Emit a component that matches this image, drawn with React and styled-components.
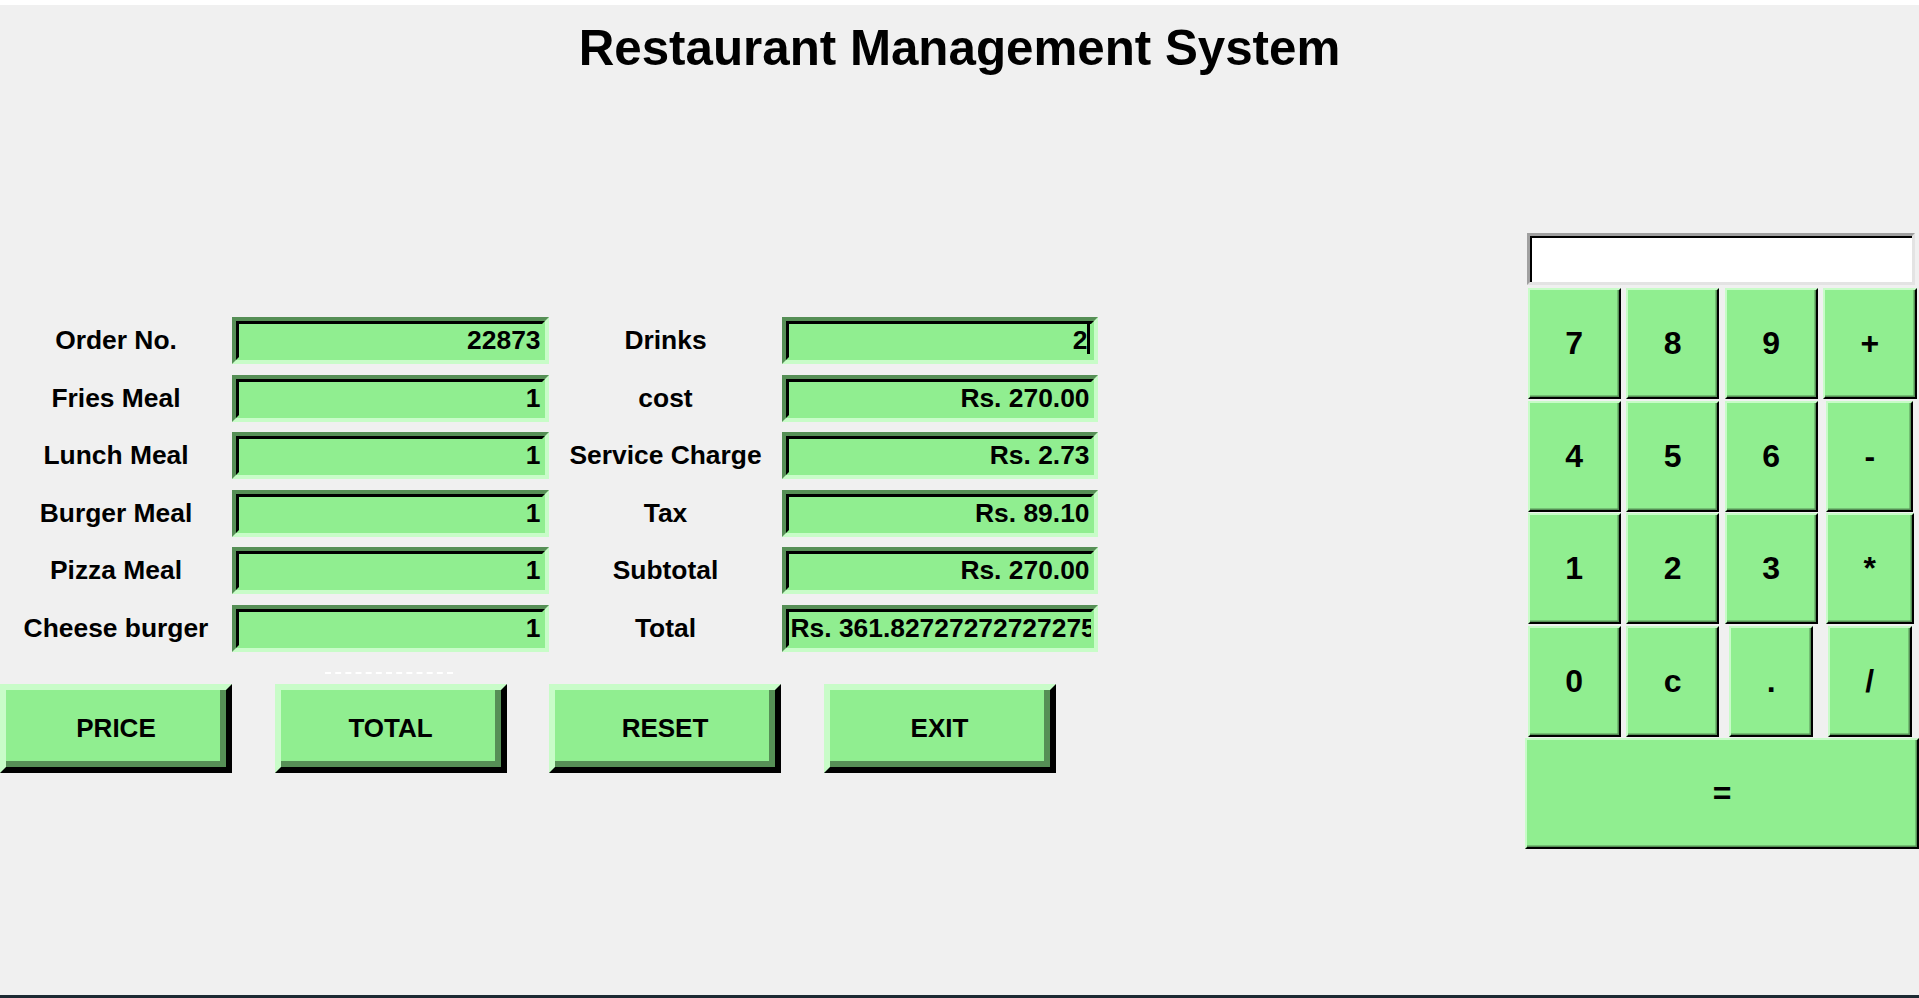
import React from 'react';
import styled, { createGlobalStyle } from 'styled-components';

const GREEN = '#90ee90';
const DARK = '#568f56';
const LIGHT = '#c8fcc8';

const GlobalStyle = createGlobalStyle`
  html, body { margin: 0; padding: 0; background: #f0f0f0; }
  body { font-family: "Liberation Sans", Arial, sans-serif; color: #000; }
  * { box-sizing: border-box; }
`;

const Page = styled.div`
  width: 1919px;
  height: 998px;
  display: flex;
  flex-direction: column;
  background: #f0f0f0;
  overflow: hidden;
`;

const TopStrip = styled.div`
  flex: none;
  height: 5px;
  background: #ffffff;
`;

const Title = styled.h1`
  margin: 0;
  padding-top: 15px;
  font-size: 49.3px;
  line-height: 56px;
  font-weight: 700;
  text-align: center;
`;

const Main = styled.main`
  flex: 1;
  display: flex;
  justify-content: space-between;
  align-items: flex-start;
`;

const LeftColumn = styled.section`
  margin-top: 241px;
  display: flex;
  flex-direction: column;
`;

const Form = styled.div`
  display: grid;
  grid-template-columns: 232px 317px 233px 316px;
  grid-auto-rows: 47px;
  row-gap: 10.5px;
`;

const Label = styled.div`
  display: flex;
  align-items: center;
  justify-content: center;
  font-size: 26.4px;
  font-weight: 700;
  white-space: nowrap;
`;

const Well = styled.div`
  border: 4px solid;
  border-color: ${DARK} ${LIGHT} ${LIGHT} ${DARK};
  background: ${GREEN};
`;

const Field = styled.div`
  height: 100%;
  border: 3.5px solid;
  border-color: #000 ${GREEN} ${GREEN} #000;
  padding: 0 1.5px;
  overflow: hidden;
  white-space: nowrap;
  text-align: right;
  font-size: 26.4px;
  line-height: 32px;
  font-weight: 700;
`;

const Caret = styled.span`
  display: inline-block;
  width: 3px;
  height: 30px;
  margin-left: -1px;
  background: #000;
  vertical-align: -5px;
`;

const DottedRule = styled.div`
  margin: 20px 0 10px 325px;
  width: 128px;
  height: 0;
  border-top: 2px dashed rgba(255, 255, 255, 0.95);
`;

const ActionRow = styled.div`
  display: flex;
  gap: 42.5px;
`;

const ActionButton = styled.button`
  width: 232px;
  height: 89px;
  padding: 0;
  border: 6px solid;
  border-color: ${LIGHT} #000 #000 ${LIGHT};
  box-shadow: inset -6px -6px 0 ${DARK};
  background: ${GREEN};
  font-family: inherit;
  font-size: 26px;
  font-weight: 700;
  color: #000;
  cursor: pointer;
`;

const CalcPanel = styled.section`
  margin-top: 157px;
  width: 394px;
  display: flex;
  flex-direction: column;
`;

const Display = styled.div`
  margin-left: 2px;
  width: 388px;
  height: 52px;
  background: #fff;
  border: 3px solid;
  border-color: #a0a0a0 #e3e3e3 #e3e3e3 #a0a0a0;
  box-shadow: inset 2px 2px 0 #000;
`;

const Keypad = styled.div`
  margin-top: 3px;
  display: grid;
  grid-template-columns: repeat(4, 98.5px);
  grid-auto-rows: 111px;
  row-gap: 1.5px;
`;

const Key = styled.button`
  width: ${(p) => p.$w}px;
  justify-self: center;
  grid-column: ${(p) => (p.$wide ? '1 / -1' : 'auto')};
  padding: 0;
  border: 2px solid;
  border-color: ${LIGHT} #000 #000 ${LIGHT};
  box-shadow: inset -1.5px -1.5px 0 ${DARK};
  background: ${GREEN};
  font-family: inherit;
  font-size: 32px;
  font-weight: 700;
  color: #000;
  cursor: pointer;
`;

const BottomBar = styled.div`
  flex: none;
  height: 3px;
  background: #1c2a33;
`;

const rows = [
  ['Order No.', '22873', 'Drinks', '2'],
  ['Fries Meal', '1', 'cost', 'Rs. 270.00'],
  ['Lunch Meal', '1', 'Service Charge', 'Rs. 2.73'],
  ['Burger Meal', '1', 'Tax', 'Rs. 89.10'],
  ['Pizza Meal', '1', 'Subtotal', 'Rs. 270.00'],
  ['Cheese burger', '1', 'Total', 'Rs. 361.82727272727275'],
];

const keys = [
  ['7', 93], ['8', 93], ['9', 93], ['+', 94],
  ['4', 93], ['5', 93], ['6', 93], ['-', 87],
  ['1', 93], ['2', 93], ['3', 93], ['*', 88],
  ['0', 93], ['c', 93], ['.', 84], ['/', 84],
];

function Entry({ value, caret }) {
  return (
    <Well>
      <Field>
        {value}
        {caret && <Caret />}
      </Field>
    </Well>
  );
}

export default function App() {
  return (
    <>
      <GlobalStyle />
      <Page>
        <TopStrip />
        <Title>Restaurant Management System</Title>
        <Main>
          <LeftColumn>
            <Form>
              {rows.map(([l1, v1, l2, v2]) => (
                <React.Fragment key={l1}>
                  <Label>{l1}</Label>
                  <Entry value={v1} />
                  <Label>{l2}</Label>
                  <Entry value={v2} caret={l2 === 'Drinks'} />
                </React.Fragment>
              ))}
            </Form>
            <DottedRule />
            <ActionRow>
              <ActionButton>PRICE</ActionButton>
              <ActionButton>TOTAL</ActionButton>
              <ActionButton>RESET</ActionButton>
              <ActionButton>EXIT</ActionButton>
            </ActionRow>
          </LeftColumn>
          <CalcPanel>
            <Display />
            <Keypad>
              {keys.map(([k, w]) => (
                <Key key={k} $w={w}>{k}</Key>
              ))}
              <Key $w={394} $wide>=</Key>
            </Keypad>
          </CalcPanel>
        </Main>
        <BottomBar />
      </Page>
    </>
  );
}
